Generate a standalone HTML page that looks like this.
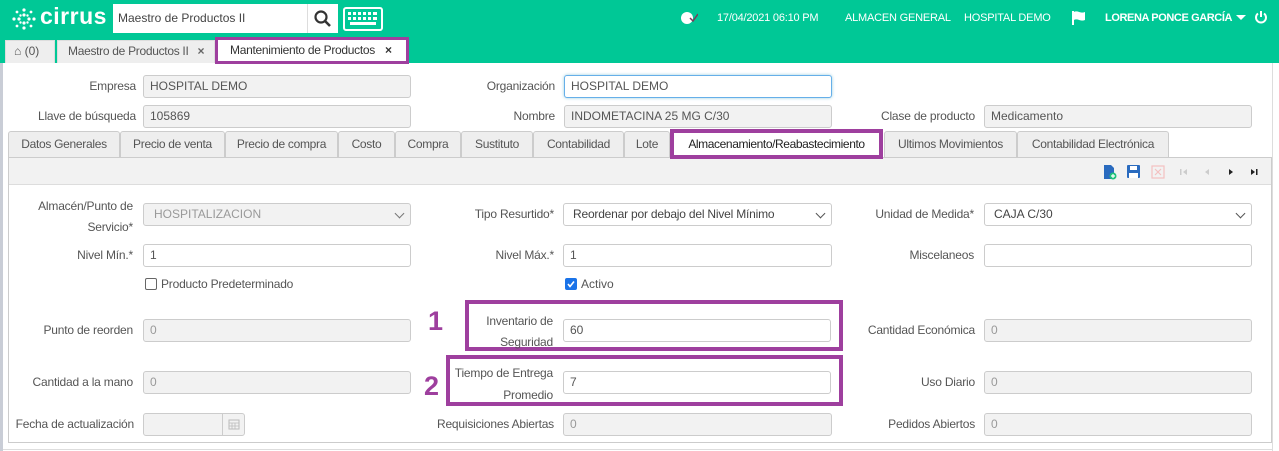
<!DOCTYPE html>
<html><head><meta charset="utf-8"><style>
*{box-sizing:border-box;margin:0;padding:0}
body{width:1279px;height:451px;overflow:hidden;background:#fff;font-family:"Liberation Sans",sans-serif;font-size:12px;color:#444;position:relative}
.a{position:absolute}
.hdr{left:0;top:0;width:1279px;height:63px;background:#00c896}
.ht{color:#fff;font-size:11px;top:12px;letter-spacing:-0.2px;white-space:nowrap}
.tab{top:40px;height:23px;background:#eee;border:1px solid #ddd;border-bottom:none;line-height:21px;padding-left:8px;color:#555;white-space:nowrap}
.lbl{text-align:right;color:#555;font-size:12px;line-height:14px;letter-spacing:-0.2px}
.in{height:23px;border:1px solid #ccc;border-radius:3px;background:#f2f2f2;line-height:21px;padding-left:6px;color:#555;font-size:12px}
.w{background:#fff}
.dis{color:#999}
.t2{top:131px;height:27px;background:#eee;border:1px solid #ccc;border-bottom:none;border-radius:3px 3px 0 0;text-align:center;line-height:25px;color:#555;font-size:12px;letter-spacing:-0.3px;white-space:nowrap}
.pb{border:4px solid #9e3f9e}
.num{color:#9e3f9e;font-size:27px;font-weight:bold}
.chev{position:absolute;right:7px;top:6px;width:7px;height:7px;border-right:1.5px solid #555;border-bottom:1.5px solid #555;transform:rotate(45deg)}
.cb{width:12px;height:12px;border:1px solid #666;border-radius:2px;background:#fff}
</style></head><body>
<div class="a hdr"></div>
<svg class="a" style="left:10px;top:7px" width="28" height="24" viewBox="0 0 28 24"><g fill="#fff"><circle cx="14" cy="3" r="1.6"/><circle cx="14" cy="8" r="1.6"/><circle cx="14" cy="16" r="1.6"/><circle cx="14" cy="21" r="1.6"/><circle cx="4" cy="12" r="1.6"/><circle cx="9" cy="12" r="1.6"/><circle cx="19" cy="12" r="1.6"/><circle cx="24" cy="12" r="1.6"/><circle cx="7" cy="5" r="1.4"/><circle cx="21" cy="5" r="1.4"/><circle cx="7" cy="19" r="1.4"/><circle cx="21" cy="19" r="1.4"/><circle cx="10.5" cy="8.5" r="1.2"/><circle cx="17.5" cy="8.5" r="1.2"/><circle cx="10.5" cy="15.5" r="1.2"/><circle cx="17.5" cy="15.5" r="1.2"/></g></svg>
<div class="a" style="left:40px;top:3px;color:#fff;font-size:23px;font-weight:bold;letter-spacing:0.5px">cirrus</div>
<div class="a" style="left:113px;top:4px;width:194px;height:29px;background:#fff;line-height:29px;padding-left:5px;font-size:12px;color:#444">Maestro de Productos II</div>
<div class="a" style="left:307px;top:4px;width:31px;height:29px;background:#fff;border-left:1px solid #ddd"></div>
<svg class="a" style="left:313px;top:9px" width="20" height="20" viewBox="0 0 20 20"><circle cx="8" cy="8" r="5.5" fill="none" stroke="#333" stroke-width="2.2"/><line x1="12" y1="12" x2="17" y2="17" stroke="#333" stroke-width="2.6"/></svg>
<svg class="a" style="left:343px;top:7px" width="40" height="24" viewBox="0 0 40 24"><rect x="1" y="1" width="38" height="22" rx="2" fill="none" stroke="#fff" stroke-width="2"/><g fill="#fff"><rect x="5" y="5" width="3" height="3"/><rect x="10" y="5" width="3" height="3"/><rect x="15" y="5" width="3" height="3"/><rect x="20" y="5" width="3" height="3"/><rect x="25" y="5" width="3" height="3"/><rect x="30" y="5" width="4" height="3"/><rect x="5" y="10" width="3" height="3"/><rect x="10" y="10" width="3" height="3"/><rect x="15" y="10" width="3" height="3"/><rect x="20" y="10" width="3" height="3"/><rect x="25" y="10" width="3" height="3"/><rect x="30" y="10" width="4" height="3"/><rect x="7" y="15" width="26" height="3"/></g></svg>
<svg class="a" style="left:680px;top:11px" width="18" height="14" viewBox="0 0 18 14"><circle cx="7" cy="7" r="6" fill="#fff"/><path d="M10 7l3 3 5-7" fill="none" stroke="#7a3a5a" stroke-width="1.5"/></svg>
<div class="a ht" style="left:717px">17/04/2021 06:10 PM</div>
<div class="a ht" style="left:845px">ALMACEN GENERAL</div>
<div class="a ht" style="left:964px">HOSPITAL DEMO</div>
<svg class="a" style="left:1072px;top:11px" width="14" height="14" viewBox="0 0 14 14"><rect x="0" y="0" width="2" height="14" fill="#fff"/><path d="M2 1c4-2 6 2 11 0v8c-5 2-7-2-11 0z" fill="#fff"/></svg>
<div class="a ht" style="left:1105px;font-weight:bold;letter-spacing:-0.4px">LORENA PONCE GARCÍA</div>
<div class="a" style="left:1236px;top:15px;border-left:5px solid transparent;border-right:5px solid transparent;border-top:5px solid #fff"></div>
<svg class="a" style="left:1254px;top:10px" width="14" height="14" viewBox="0 0 14 14"><path d="M4 3.5a5 5 0 1 0 6 0" fill="none" stroke="#fff" stroke-width="2"/><line x1="7" y1="1" x2="7" y2="7" stroke="#fff" stroke-width="2"/></svg>
<div class="a tab" style="left:5px;width:50px;padding-left:8px">&#8962; (0)</div>
<div class="a tab" style="left:57px;width:158px;padding-left:10px;letter-spacing:-0.3px">Maestro de Productos II <span style="margin-left:6px;color:#666;font-weight:bold">×</span></div>
<div class="a" style="left:215px;top:37px;width:194px;height:27px;background:#fff;border:3px solid #9e3f9e;line-height:21px;padding-left:12px;color:#333;letter-spacing:-0.3px;white-space:nowrap">Mantenimiento de Productos <span style="margin-left:7px;font-weight:bold">×</span></div>
<div class="a" style="left:0;top:63px;width:3px;height:388px;background:#c9cdd6"></div>
<div class="a" style="left:1272px;top:63px;width:1px;height:388px;background:#ddd"></div>
<div class="a lbl" style="left:20px;width:116px;top:79px">Empresa</div>
<div class="a in" style="left:143px;top:75px;width:268px">HOSPITAL DEMO</div>
<div class="a lbl" style="left:20px;width:116px;top:109px">Llave de búsqueda</div>
<div class="a in" style="left:143px;top:105px;width:268px">105869</div>
<div class="a lbl" style="left:440px;width:115px;top:79px">Organización</div>
<div class="a in w" style="left:564px;top:75px;width:268px;border-color:#66afe9;box-shadow:0 0 3px #9cd">HOSPITAL DEMO</div>
<div class="a lbl" style="left:440px;width:115px;top:109px">Nombre</div>
<div class="a in" style="left:564px;top:105px;width:268px">INDOMETACINA 25 MG C/30</div>
<div class="a lbl" style="left:840px;width:135px;top:109px">Clase de producto</div>
<div class="a in" style="left:984px;top:105px;width:268px">Medicamento</div>
<div class="a t2" style="left:8px;width:112px">Datos Generales</div>
<div class="a t2" style="left:120px;width:105px">Precio de venta</div>
<div class="a t2" style="left:225px;width:113px">Precio de compra</div>
<div class="a t2" style="left:338px;width:57px">Costo</div>
<div class="a t2" style="left:395px;width:66px">Compra</div>
<div class="a t2" style="left:461px;width:72px">Sustituto</div>
<div class="a t2" style="left:533px;width:91px">Contabilidad</div>
<div class="a t2" style="left:624px;width:46px">Lote</div>
<div class="a t2" style="left:884px;width:133px">Ultimos Movimientos</div>
<div class="a t2" style="left:1017px;width:152px">Contabilidad Electrónica</div>
<div class="a" style="left:8px;top:157px;width:1264px;height:286px;border:1px solid #ccc;background:#fff"></div>
<div class="a" style="left:9px;top:158px;width:1262px;height:27px;background:#f2f2f2;border-bottom:1px solid #ddd"></div>
<div class="a" style="left:670px;top:129px;width:213px;height:30px;background:#fff;border:4px solid #9e3f9e;text-align:center;line-height:22px;color:#222;font-size:12px;letter-spacing:-0.4px;white-space:nowrap">Almacenamiento/Reabastecimiento</div>
<svg class="a" style="left:1102px;top:164px" width="160" height="16" viewBox="0 0 160 16">
<path d="M2 1h7l3 3v11H2z" fill="#2a6bbf"/><circle cx="11" cy="12" r="3.5" fill="#1ec27a"/><path d="M9 12h4M11 10v4" stroke="#fff" stroke-width="1.2"/>
<rect x="25" y="1" width="13" height="13" rx="1" fill="#2a6bbf"/><rect x="28" y="2" width="7" height="4" fill="#fff"/><rect x="27" y="9" width="9" height="5" fill="#fff"/>
<rect x="50" y="2" width="12" height="12" fill="none" stroke="#f4c0c0" stroke-width="1.2"/><path d="M53 5l6 6M59 5l-6 6" stroke="#f4c0c0" stroke-width="1.2"/>
<rect x="78" y="5" width="1.5" height="6" fill="#ccc"/><path d="M85 5v6l-4-3z" fill="#ccc"/>
<path d="M107 5v6l-4-3z" fill="#ccc"/>
<path d="M127 5v6l4-3z" fill="#222"/>
<path d="M149 5v6l4-3z" fill="#222"/><rect x="154" y="5" width="1.5" height="6" fill="#222"/>
</svg>
<div class="a lbl" style="left:20px;width:113px;top:196px;line-height:21px">Almacén/Punto de<br>Servicio*</div>
<div class="a in dis" style="left:143px;top:203px;width:268px;padding-left:10px">HOSPITALIZACION<span class="chev" style="border-color:#777"></span></div>
<div class="a lbl" style="left:420px;width:134px;top:207px">Tipo Resurtido*</div>
<div class="a in w" style="left:563px;top:203px;width:269px;padding-left:9px;color:#444;letter-spacing:-0.2px">Reordenar por debajo del Nivel Mínimo<span class="chev"></span></div>
<div class="a lbl" style="left:840px;width:134px;top:207px">Unidad de Medida*</div>
<div class="a in w" style="left:984px;top:203px;width:268px;padding-left:9px;color:#444">CAJA C/30<span class="chev"></span></div>
<div class="a lbl" style="left:20px;width:113px;top:248px">Nivel Mín.*</div>
<div class="a in w" style="left:143px;top:244px;width:268px">1</div>
<div class="a lbl" style="left:420px;width:134px;top:248px">Nivel Máx.*</div>
<div class="a in w" style="left:563px;top:244px;width:269px">1</div>
<div class="a lbl" style="left:840px;width:134px;top:248px">Miscelaneos</div>
<div class="a in w" style="left:984px;top:244px;width:268px"></div>
<div class="a cb" style="left:145px;top:278px"></div>
<div class="a" style="left:161px;top:277px;color:#555;letter-spacing:-0.2px">Producto Predeterminado</div>
<div class="a cb" style="left:565px;top:278px;background:#1a73e8;border-color:#1a73e8"></div>
<svg class="a" style="left:566px;top:279px" width="10" height="10" viewBox="0 0 10 10"><path d="M2 5l2 2.5 4-5" fill="none" stroke="#fff" stroke-width="1.6"/></svg>
<div class="a" style="left:581px;top:277px;color:#555">Activo</div>
<div class="a lbl" style="left:20px;width:113px;top:323px">Punto de reorden</div>
<div class="a in dis" style="left:143px;top:319px;width:268px">0</div>
<div class="a num" style="left:428px;top:306px">1</div>
<div class="a pb" style="left:465px;top:300px;width:378px;height:51px"></div>
<div class="a lbl" style="left:470px;width:83px;top:311px;line-height:21px">Inventario de<br>Seguridad</div>
<div class="a in w" style="left:563px;top:319px;width:268px">60</div>
<div class="a lbl" style="left:840px;width:135px;top:323px">Cantidad Económica</div>
<div class="a in dis" style="left:984px;top:319px;width:268px">0</div>
<div class="a lbl" style="left:20px;width:113px;top:375px">Cantidad a la mano</div>
<div class="a in dis" style="left:143px;top:371px;width:268px">0</div>
<div class="a num" style="left:424px;top:371px">2</div>
<div class="a pb" style="left:446px;top:355px;width:397px;height:51px"></div>
<div class="a lbl" style="left:450px;width:103px;top:362px;line-height:22px">Tiempo de Entrega<br>Promedio</div>
<div class="a in w" style="left:563px;top:371px;width:268px">7</div>
<div class="a lbl" style="left:840px;width:135px;top:375px">Uso Diario</div>
<div class="a in dis" style="left:984px;top:371px;width:268px">0</div>
<div class="a lbl" style="left:10px;width:124px;top:417px">Fecha de actualización</div>
<div class="a in" style="left:143px;top:413px;width:102px"></div>
<div class="a" style="left:222px;top:414px;width:1px;height:21px;background:#ccc"></div>
<svg class="a" style="left:228px;top:418px" width="12" height="12" viewBox="0 0 12 12"><rect x="1" y="2" width="10" height="9" fill="none" stroke="#bbb"/><path d="M1 5h10M4 5v6M7 5v6M1 8h10" stroke="#bbb" stroke-width=".8"/></svg>
<div class="a lbl" style="left:420px;width:134px;top:417px">Requisiciones Abiertas</div>
<div class="a in dis" style="left:563px;top:413px;width:269px">0</div>
<div class="a lbl" style="left:840px;width:135px;top:417px">Pedidos Abiertos</div>
<div class="a in dis" style="left:984px;top:413px;width:268px">0</div>
<div class="a" style="left:3px;top:449px;width:1270px;height:1px;background:#ddd"></div>
</body></html>
